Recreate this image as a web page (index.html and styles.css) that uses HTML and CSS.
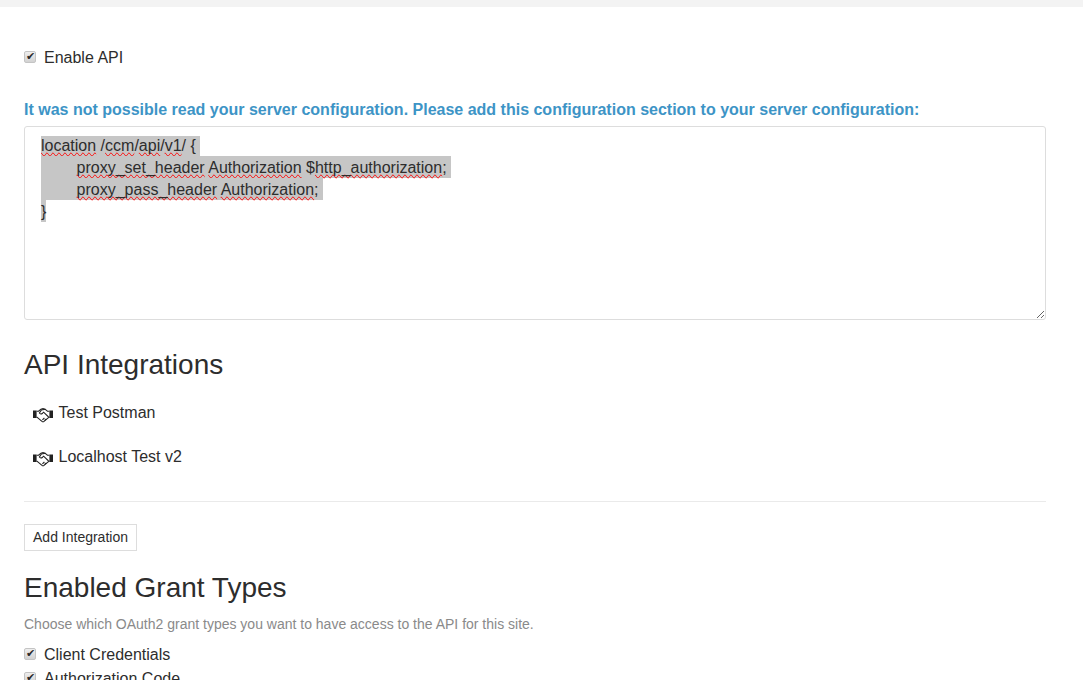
FILE: index.html
```html
<!DOCTYPE html>
<html lang="en">
  <head>
    <meta charset="UTF-8" />
    <meta name="viewport" content="width=device-width, initial-scale=1.0" />
    <title>API Settings</title>
    <link rel="stylesheet" href="styles.css">
  </head>
  <body>
    <div class="top-bar"></div>
    <div class="content">
      <label class="check enable-api">
        <input type="checkbox" checked />
        <span>Enable API</span>
      </label>

      <p class="config-note">It was not possible read your server configuration. Please add this configuration section to your server configuration:</p>
      <div class="config-box"><span class="sel sel-first"><span class="typo">location</span> /<span class="typo">ccm</span>/<span class="typo">api</span>/<span class="typo">v1</span>/ { </span>
<span class="sel">	<span class="typo">proxy_set_header</span> <span class="typo">Authorization</span> $<span class="typo">http_authorization</span>; </span>
<span class="sel">	<span class="typo">proxy_pass_header</span> <span class="typo">Authorization</span>; </span>
<span class="sel">}</span></div>

      <h3 class="integrations-title">API Integrations</h3>
      <ul class="integrations">
        <li>
          <svg class="shake" viewBox="0 0 20 16"><use href="#handshake" /></svg>
          Test Postman
        </li>
        <li>
          <svg class="shake" viewBox="0 0 20 16"><use href="#handshake" /></svg>
          Localhost Test v2
        </li>
      </ul>
      <hr />
      <button class="btn">Add Integration</button>

      <h3 class="grant-title">Enabled Grant Types</h3>
      <p class="help">Choose which OAuth2 grant types you want to have access to the API for this site.</p>
      <label class="check">
        <input type="checkbox" checked />
        <span>Client Credentials</span>
      </label>
      <label class="check">
        <input type="checkbox" checked />
        <span>Authorization Code</span>
      </label>
    </div>

    <svg class="defs" width="0" height="0">
      <symbol id="handshake" viewBox="0 0 20 16">
        <path d="M0 3.5h3.6v7.5H0zM16.4 3.5H20v7.5h-3.6z" fill="#222" />
        <path d="M3.6 4.2H5.6Q8 1.6 10 1.6T14.4 4.2H16.4M3.6 9.8 9 14.4Q10 15.2 11 14.4L16.4 9.8" fill="none" stroke="#222" stroke-width="1.1" />
        <path d="M12.4 2.2 8.4 3 6.4 6Q7.6 7.8 9.6 6.2L10.6 5.2 15.6 10M9.4 12.8 11.4 11M11.6 13.4 13.4 11.8" fill="none" stroke="#222" stroke-width="1.1" />
      </symbol>
    </svg>
  </body>
</html>
```

FILE: styles.css
```css
html,
body {
  height: 100%;
}

body {
  margin: 0;
  overflow: hidden;
  background-color: #fff;
  color: #2d2d2d;
  font-family: "Liberation Sans", Arial, sans-serif;
  font-size: 16px;
  line-height: 22px;
}

.top-bar {
  height: 7px;
  background-color: #f3f3f3;
}

.content {
  padding: 39px 37px 0 24px;
}

.check {
  display: flex;
  align-items: center;
  gap: 8px;
  height: 24px;
}

.check input {
  appearance: none;
  position: relative;
  flex: none;
  width: 12px;
  height: 12px;
  margin: 0 0 2px;
  border: 1px solid #c4c4c4;
  border-radius: 2px;
  background: linear-gradient(#eeeeee, #d2d2d2);
}

.check input::after {
  content: "\2714";
  position: absolute;
  top: 0;
  left: 1px;
  color: #2a2a2a;
  font-family: "DejaVu Sans", sans-serif;
  font-size: 11px;
  line-height: 10px;
}

.enable-api {
  margin-bottom: 29px;
}

.config-note {
  margin: 0 0 5px;
  color: #3d94c6;
  font-weight: bold;
}

.config-box {
  box-sizing: border-box;
  height: 194px;
  padding: 8px 16px;
  border: 1px solid #ddd;
  border-radius: 3px;
  overflow: auto;
  resize: vertical;
  white-space: pre-wrap;
  tab-size: 8;
}

.sel {
  background-color: #c6c6c6;
  padding: 3px 0 2px;
}

.sel-first {
  padding-top: 1px;
}

.typo {
  text-decoration-line: spelling-error;
}

h3 {
  margin: 0;
  font-size: 28px;
  font-weight: normal;
  line-height: 34px;
}

.integrations-title {
  margin-top: 28px;
}

.integrations {
  margin: 20px 0 0;
  padding: 0 0 0 9px;
  list-style: none;
}

.integrations li {
  display: flex;
  align-items: center;
  gap: 5.5px;
  height: 22px;
  margin-bottom: 22px;
}

.shake {
  width: 20px;
  height: 16px;
  margin-top: 4px;
}

.defs {
  position: absolute;
}

hr {
  margin: 33px 0 22px;
  border: 0;
  border-top: 1px solid #eaeaea;
}

.btn {
  display: block;
  box-sizing: border-box;
  width: 113px;
  height: 27px;
  padding: 0 0 2px;
  border: 1px solid #ddd;
  background-color: #fff;
  color: #2d2d2d;
  font-family: inherit;
  font-size: 14px;
  cursor: pointer;
}

.grant-title {
  margin-top: 20px;
}

.help {
  margin: 9px 0 9px;
  color: #8a8a8a;
  font-size: 14px;
  line-height: 20px;
}
```
